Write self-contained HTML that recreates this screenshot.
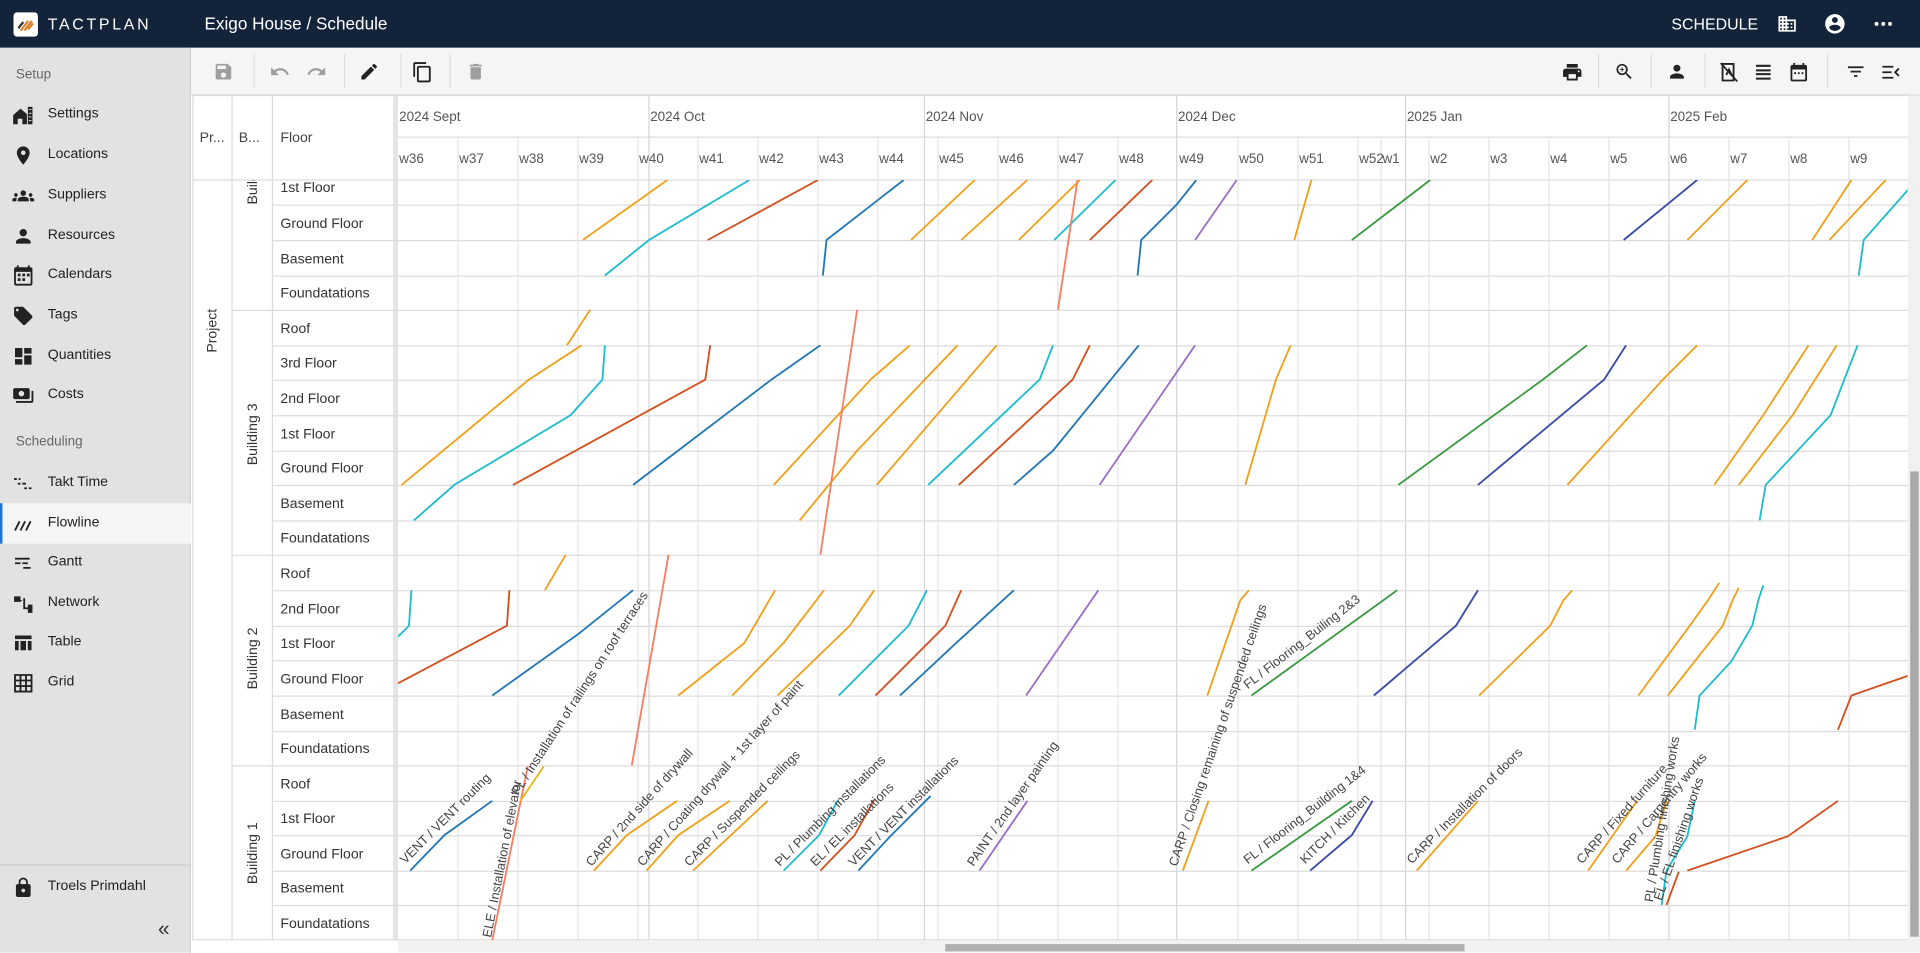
<!DOCTYPE html>
<html><head><meta charset="utf-8"><style>
*{box-sizing:border-box;margin:0;padding:0}
html,body{width:1920px;height:953px;overflow:hidden;background:#fff;font-family:"Liberation Sans",Arial,sans-serif}
.app{position:absolute;left:0;top:0;width:1568px;height:778px;transform:scale(1.2244898);transform-origin:0 0}
.hdr{position:absolute;left:0;top:0;width:1568px;height:39px;background:#13233a;color:#fff}
.side{position:absolute;left:0;top:39px;width:156px;height:739px;background:#e2e2e2;border-right:1px solid #d0d0d0}
.side .sec{position:absolute;left:13px;font-size:11px;color:#666}
.side .it{position:absolute;left:0;width:156px;height:33px;font-size:11.5px;color:#222}
.side .it span{position:absolute;left:39px;top:10px}
.side .it svg{position:absolute;left:10px;top:8px}
.tb{position:absolute;left:156px;top:39px;width:1412px;height:39px;background:#f5f5f5;border-bottom:1px solid #ddd}
.tb svg{position:absolute;top:11px}
.tb .dv{position:absolute;top:5px;width:1px;height:28px;background:#ddd}
</style></head><body><div class="app">
<div class="hdr">
 <svg style="position:absolute;left:11px;top:10px" width="20" height="20" viewBox="0 0 20 20"><rect width="20" height="20" rx="3" fill="#fff"/><path d="M4 13l4-5M6 15l6-8M9 15l6-8M12 14l4-5" stroke="#d9822b" stroke-width="1.8"/><path d="M4 13l4-5" stroke="#333" stroke-width="1.8"/></svg>
 <div style="position:absolute;left:39px;top:12px;font-size:13px;letter-spacing:2.2px">TACTPLAN</div>
 <div style="position:absolute;left:167px;top:11px;font-size:14px">Exigo House / Schedule</div>
 <div style="position:absolute;left:1365px;top:12px;font-size:13px">SCHEDULE</div>
 <svg style="position:absolute;left:1451px;top:11px" width="17" height="17" viewBox="0 0 24 24"><path fill="#fff" d="M12 7V3H2v18h20V7H12zM6 19H4v-2h2v2zm0-4H4v-2h2v2zm0-4H4V9h2v2zm0-4H4V5h2v2zm4 12H8v-2h2v2zm0-4H8v-2h2v2zm0-4H8V9h2v2zm0-4H8V5h2v2zm10 12h-8v-2h2v-2h-2v-2h2v-2h-2V9h8v10zm-2-8h-2v2h2v-2zm0 4h-2v2h2v-2z"/></svg>
 <svg style="position:absolute;left:1489px;top:10px" width="19" height="19" viewBox="0 0 24 24"><path fill="#fff" d="M12 2C6.48 2 2 6.480 2 12s4.48 10 10 10 10-4.48 10-10S17.52 2 12 2zm0 3c1.66 0 3 1.34 3 3s-1.34 3-3 3-3-1.34-3-3 1.34-3 3-3zm0 14.2c-2.5 0-4.71-1.28-6-3.22.03-1.99 4-3.08 6-3.08 1.99 0 5.97 1.09 6 3.08-1.29 1.94-3.5 3.22-6 3.22z"/></svg>
 <svg style="position:absolute;left:1530px;top:17px" width="16" height="5" viewBox="0 0 16 5"><circle cx="2.5" cy="2.5" r="1.6" fill="#fff"/><circle cx="8" cy="2.5" r="1.6" fill="#fff"/><circle cx="13.5" cy="2.5" r="1.6" fill="#fff"/></svg>
</div>
<div class="side">
 <div class="sec" style="top:16px">Setup</div>
 <div class="it" style="top:38px"><svg width="18" height="18" viewBox="0 0 24 24"><path fill="#222" d="M1 12l8-7 7 6v11h-5v-6H6v6H1z"/><rect x="17" y="3" width="5" height="19" fill="#222"/><path d="M18 6h3M18 10h3M18 14h3M18 18h3" stroke="#e2e2e2"/></svg><span>Settings</span></div>
 <div class="it" style="top:71px"><svg width="18" height="18" viewBox="0 0 24 24"><path fill="#222" d="M12 2C8.13 2 5 5.13 5 9c0 5.25 7 13 7 13s7-7.75 7-13c0-3.870-3.13-7-7-7zm0 9.5c-1.38 0-2.5-1.12-2.5-2.5s1.12-2.5 2.5-2.5 2.5 1.12 2.5 2.5-1.12 2.5-2.5 2.5z"/></svg><span>Locations</span></div>
 <div class="it" style="top:104px"><svg width="18" height="18" viewBox="0 0 24 24"><path fill="#222" d="M12 12.75c1.63 0 3.07.39 4.24.9 1.08.48 1.76 1.56 1.76 2.73V18H6v-1.61c0-1.18.68-2.26 1.76-2.73 1.17-.52 2.61-.91 4.240-.91zM4 13c1.1 0 2-.9 2-2s-.9-2-2-2-2 .9-2 2 .9 2 2 2zm1.13 1.1C4.76 14.04 4.39 14 4 14c-.99 0-1.93.21-2.78.58C.48 14.9 0 15.62 0 16.43V18h4.5v-1.61c0-.83.23-1.61.63-2.29zM20 13c1.1 0 2-.9 2-2s-.9-2-2-2-2 .9-2 2 .9 2 2 2zm4 3.43c0-.81-.48-1.53-1.22-1.85-.85-.37-1.79-.58-2.78-.58-.39 0-.76.04-1.13.1.4.68.63 1.46.63 2.29V18H24v-1.57zM12 6c1.66 0 3 1.34 3 3s-1.34 3-3 3-3-1.34-3-3 1.34-3 3-3z"/></svg><span>Suppliers</span></div>
 <div class="it" style="top:137px"><svg width="18" height="18" viewBox="0 0 24 24"><path fill="#222" d="M12 12c2.21 0 4-1.79 4-4s-1.79-4-4-4-4 1.79-4 4 1.79 4 4 4zm0 2c-2.67 0-8 1.34-8 4v2h16v-2c0-2.66-5.33-4-8-4z"/></svg><span>Resources</span></div>
 <div class="it" style="top:169px"><svg width="18" height="18" viewBox="0 0 24 24"><path fill="#222" d="M20 3h-1V1h-2v2H7V1H5v2H4c-1.1 0-2 .9-2 2v16c0 1.1.9 2 2 2h16c1.1 0 2-.9 2-2V5c0-1.1-.9-2-2-2zm0 18H4V8h16v13zM6 10h3v3H6zm5 0h3v3h-3zm5 0h3v3h-3zM6 15h3v3H6zm5 0h3v3h-3z"/></svg><span>Calendars</span></div>
 <div class="it" style="top:202px"><svg width="18" height="18" viewBox="0 0 24 24"><path fill="#222" d="M21.41 11.58l-9-9C12.05 2.22 11.55 2 11 2H4c-1.1 0-2 .9-2 2v7c0 .55.22 1.05.59 1.42l9 9c.36.36.86.58 1.41.58s1.05-.22 1.41-.59l7-7c.37-.36.59-.86.59-1.41s-.23-1.06-.59-1.42zM5.5 7C4.67 7 4 6.33 4 5.5S4.67 4 5.5 4 7 4.67 7 5.5 6.33 7 5.5 7z"/></svg><span>Tags</span></div>
 <div class="it" style="top:235px"><svg width="18" height="18" viewBox="0 0 24 24"><path fill="#222" d="M3 13h8V3H3v10zm0 8h8v-6H3v6zm10 0h8V11h-8v10zm0-18v6h8V3h-8z"/></svg><span>Quantities</span></div>
 <div class="it" style="top:267px"><svg width="18" height="18" viewBox="0 0 24 24"><path fill="#222" d="M19 14V6c0-1.1-.9-2-2-2H3c-1.1 0-2 .9-2 2v8c0 1.1.9 2 2 2h14c1.1 0 2-.9 2-2zm-9-1c-1.66 0-3-1.34-3-3s1.34-3 3-3 3 1.34 3 3-1.34 3-3 3zm13-6v11c0 1.1-.9 2-2 2H4v-2h17V7h2z"/></svg><span>Costs</span></div>
 <div class="sec" style="top:316px">Scheduling</div>
 <div class="it" style="top:339px"><svg width="18" height="18" viewBox="0 0 24 24"><path d="M2 7h3M7 7h2M6 12h3M11 12h4M13 17h3M18 17h3" stroke="#222" stroke-width="2"/></svg><span>Takt Time</span></div>
 <div class="it" style="top:372px;background:#f5f5f5;border-left:2px solid #1976d2"><svg width="18" height="18" viewBox="0 0 24 24" style="left:8px"><path d="M3 19l5-10M9 19l5-10M15 19l5-10" stroke="#222" stroke-width="2"/></svg><span style="left:37px">Flowline</span></div>
 <div class="it" style="top:404px"><svg width="18" height="18" viewBox="0 0 24 24"><path d="M3 7h16M3 12h6M11 12h6M12 17h8" stroke="#222" stroke-width="2"/></svg><span>Gantt</span></div>
 <div class="it" style="top:437px"><svg width="18" height="18" viewBox="0 0 24 24"><path fill="#222" d="M2 4h7v6H2zM11 6h3v10h3v-3h5v9h-5v-4h-5V6zM11 8h-2v2"/></svg><span>Network</span></div>
 <div class="it" style="top:469px"><svg width="18" height="18" viewBox="0 0 24 24"><path fill="#222" d="M3 4h18v4H3zM3 10h4v10H3zM9 10h6v10H9zM17 10h4v10h-4z"/></svg><span>Table</span></div>
 <div class="it" style="top:502px"><svg width="18" height="18" viewBox="0 0 24 24"><path fill="none" stroke="#222" stroke-width="2" d="M3 3h18v18H3zM9 3v18M15 3v18M3 9h18M3 15h18"/></svg><span>Grid</span></div>
 <div style="position:absolute;left:0;top:667px;width:156px;height:1px;background:#ccc"></div>
 <div class="it" style="top:669px"><svg width="18" height="18" viewBox="0 0 24 24"><path fill="#222" d="M18 8h-1V6c0-2.76-2.24-5-5-5S7 3.24 7 6v2H6c-1.1 0-2 .9-2 2v10c0 1.1.9 2 2 2h12c1.1 0 2-.9 2-2V10c0-1.1-.9-2-2-2zm-6 9c-1.1 0-2-.9-2-2s.9-2 2-2 2 .9 2 2-.9 2-2 2zm3.1-9H8.9V6c0-1.71 1.39-3.1 3.1-3.1 1.71 0 3.1 1.39 3.1 3.1v2z"/></svg><span>Troels Primdahl</span></div>
 <div style="position:absolute;left:129px;top:710px;font-size:17px;color:#333">«</div>
</div>
<div class="tb">
 <svg style="left:18px" width="17" height="17" viewBox="0 0 24 24"><path fill="#9e9e9e" d="M17 3H5c-1.11 0-2 .9-2 2v14c0 1.1.89 2 2 2h14c1.1 0 2-.9 2-2V7l-4-4zm-5 16c-1.66 0-3-1.34-3-3s1.34-3 3-3 3 1.34 3 3-1.34 3-3 3zm3-10H5V5h10v4z"/></svg>
 <div class="dv" style="left:51px"></div>
 <svg style="left:64px" width="17" height="17" viewBox="0 0 24 24"><path fill="#9e9e9e" d="M12.5 8c-2.65 0-5.05.99-6.9 2.6L2 7v9h9l-3.62-3.62c1.39-1.16 3.16-1.88 5.12-1.88 3.54 0 6.55 2.31 7.6 5.5l2.37-.78C21.08 11.03 17.15 8 12.5 8z"/></svg>
 <svg style="left:94px" width="17" height="17" viewBox="0 0 24 24"><path fill="#9e9e9e" d="M18.4 10.6C16.55 8.99 14.15 8 11.5 8c-4.65 0-8.58 3.03-9.96 7.22L3.9 16c1.05-3.19 4.05-5.5 7.6-5.5 1.95 0 3.73.72 5.12 1.88L13 16h9V7l-3.6 3.6z"/></svg>
 <div class="dv" style="left:125px"></div>
 <svg style="left:137px" width="17" height="17" viewBox="0 0 24 24"><path fill="#222" d="M3 17.25V21h3.75L17.81 9.94l-3.75-3.75L3 17.25zM20.71 7.04c.39-.39.39-1.02 0-1.41l-2.34-2.34c-.39-.39-1.02-.39-1.41 0l-1.83 1.83 3.75 3.75 1.83-1.83z"/></svg>
 <div class="dv" style="left:171px"></div>
 <svg style="left:180px" width="18" height="18" viewBox="0 0 24 24"><path fill="#222" d="M16 1H4c-1.1 0-2 .9-2 2v14h2V3h12V1zm3 4H8c-1.1 0-2 .9-2 2v14c0 1.1.9 2 2 2h11c1.1 0 2-.9 2-2V7c0-1.1-.9-2-2-2zm0 16H8V7h11v14z"/></svg>
 <div class="dv" style="left:211px"></div>
 <svg style="left:224px" width="17" height="17" viewBox="0 0 24 24"><path fill="#9e9e9e" d="M6 19c0 1.1.9 2 2 2h8c1.1 0 2-.9 2-2V7H6v12zM19 4h-3.5l-1-1h-5l-1 1H5v2h14V4z"/></svg>
 <svg style="left:1119px" width="18" height="18" viewBox="0 0 24 24"><path fill="#222" d="M19 8H5c-1.66 0-3 1.34-3 3v6h4v4h12v-4h4v-6c0-1.66-1.34-3-3-3zm-3 11H8v-5h8v5zm3-7c-.55 0-1-.45-1-1s.45-1 1-1 1 .45 1 1-.45 1-1 1zm-1-9H6v4h12V3z"/></svg>
 <div class="dv" style="left:1149px"></div>
 <svg style="left:1162px" width="17" height="17" viewBox="0 0 24 24"><path fill="#222" d="M15.5 14h-.79l-.28-.27C15.41 12.59 16 11.11 16 9.5 16 5.91 13.09 3 9.5 3S3 5.91 3 9.5 5.91 16 9.5 16c1.61 0 3.09-.59 4.23-1.57l.27.28v.79l5 4.99L20.49 19l-4.990-5zm-6 0C7.01 14 5 11.99 5 9.5S7.01 5 9.5 5 14 7.01 14 9.5 11.99 14 9.5 14zM12 10h-2v2H9v-2H7V9h2V7h1v2h2v1z"/></svg>
 <div class="dv" style="left:1192px"></div>
 <svg style="left:1205px" width="17" height="17" viewBox="0 0 24 24"><path fill="#222" d="M12 12c2.21 0 4-1.79 4-4s-1.79-4-4-4-4 1.79-4 4 1.79 4 4 4zm0 2c-2.67 0-8 1.34-8 4v2h16v-2c0-2.66-5.33-4-8-4z"/></svg>
 <div class="dv" style="left:1236px"></div>
 <svg style="left:1247px" width="18" height="18" viewBox="0 0 24 24"><path fill="none" stroke="#222" stroke-width="2" d="M5 3h12v18H5zM3 2l18 20M9 15l3-6 3 6"/></svg>
 <svg style="left:1275px" width="18" height="18" viewBox="0 0 24 24"><path stroke="#222" stroke-width="2.2" d="M4 5h16M4 10h16M4 14h16M4 19h16"/></svg>
 <svg style="left:1304px" width="18" height="18" viewBox="0 0 24 24"><path fill="#222" d="M19 4h-1V2h-2v2H8V2H6v2H5c-1.1 0-2 .9-2 2v14c0 1.1.9 2 2 2h14c1.1 0 2-.9 2-2V6c0-1.1-.9-2-2-2zm0 16H5V9h14v11zM7 12h2v2H7zm4 0h2v2h-2zm4 0h2v2h-2z"/></svg>
 <div class="dv" style="left:1336px"></div>
 <svg style="left:1351px" width="17" height="17" viewBox="0 0 24 24"><path fill="#222" d="M10 18h4v-2h-4v2zM3 6v2h18V6H3zm3 7h12v-2H6v2z"/></svg>
 <svg style="left:1379px" width="18" height="18" viewBox="0 0 24 24"><path stroke="#222" stroke-width="2" fill="none" d="M3 6h12M3 12h10M3 18h12M21 8l-4 4 4 4"/></svg>
</div>
<svg style="position:absolute;left:0;top:0" width="1568" height="778" viewBox="0 0 1568 778" font-family="Liberation Sans, Arial, sans-serif">
<defs><clipPath id="cb"><rect x="157" y="147" width="1401" height="621"/></clipPath><clipPath id="cc"><rect x="325" y="147" width="1233" height="621"/></clipPath><clipPath id="ch"><rect x="325" y="78" width="1233" height="69"/></clipPath></defs>
<rect x="157" y="78" width="1401" height="690" fill="#fff"/>
<rect x="321" y="78" width="4" height="690" fill="#e4e4e4"/>
<g stroke="#dcdcdc" stroke-width="1">
<line x1="157" y1="78" x2="1558" y2="78"/><line x1="157" y1="147" x2="1558" y2="147"/><line x1="325" y1="112" x2="1558" y2="112"/>
<line x1="157.5" y1="78" x2="157.5" y2="768"/><line x1="189.5" y1="78" x2="189.5" y2="768"/><line x1="222.5" y1="78" x2="222.5" y2="768"/>
</g>
<g font-size="11.5" fill="#444"><text x="163" y="116">Pr...</text><text x="195" y="116">B...</text><text x="229" y="116">Floor</text></g>
<g clip-path="url(#ch)">
<g stroke="#e4e4e4"><line x1="374" y1="112" x2="374" y2="147"/><line x1="423" y1="112" x2="423" y2="147"/><line x1="472" y1="112" x2="472" y2="147"/><line x1="521" y1="112" x2="521" y2="147"/><line x1="570" y1="112" x2="570" y2="147"/><line x1="619" y1="112" x2="619" y2="147"/><line x1="668" y1="112" x2="668" y2="147"/><line x1="717" y1="112" x2="717" y2="147"/><line x1="766" y1="112" x2="766" y2="147"/><line x1="815" y1="112" x2="815" y2="147"/><line x1="864" y1="112" x2="864" y2="147"/><line x1="913" y1="112" x2="913" y2="147"/><line x1="1011" y1="112" x2="1011" y2="147"/><line x1="1060" y1="112" x2="1060" y2="147"/><line x1="1109" y1="112" x2="1109" y2="147"/><line x1="1128" y1="112" x2="1128" y2="147"/><line x1="1167" y1="112" x2="1167" y2="147"/><line x1="1216" y1="112" x2="1216" y2="147"/><line x1="1265" y1="112" x2="1265" y2="147"/><line x1="1314" y1="112" x2="1314" y2="147"/><line x1="1412" y1="112" x2="1412" y2="147"/><line x1="1461" y1="112" x2="1461" y2="147"/><line x1="1510" y1="112" x2="1510" y2="147"/></g>
<g stroke="#d4d4d4"><line x1="530" y1="78" x2="530" y2="147"/><line x1="755" y1="78" x2="755" y2="147"/><line x1="961" y1="78" x2="961" y2="147"/><line x1="1148" y1="78" x2="1148" y2="147"/><line x1="1363" y1="78" x2="1363" y2="147"/></g>
<g font-size="11" fill="#555"><text x="326" y="99">2024 Sept</text><text x="531" y="99">2024 Oct</text><text x="756" y="99">2024 Nov</text><text x="962" y="99">2024 Dec</text><text x="1149" y="99">2025 Jan</text><text x="1364" y="99">2025 Feb</text>
<text x="326" y="133">w36</text><text x="375" y="133">w37</text><text x="424" y="133">w38</text><text x="473" y="133">w39</text><text x="522" y="133">w40</text><text x="571" y="133">w41</text><text x="620" y="133">w42</text><text x="669" y="133">w43</text><text x="718" y="133">w44</text><text x="767" y="133">w45</text><text x="816" y="133">w46</text><text x="865" y="133">w47</text><text x="914" y="133">w48</text><text x="963" y="133">w49</text><text x="1012" y="133">w50</text><text x="1061" y="133">w51</text><text x="1110" y="133">w52</text><text x="1129" y="133">w1</text><text x="1168" y="133">w2</text><text x="1217" y="133">w3</text><text x="1266" y="133">w4</text><text x="1315" y="133">w5</text><text x="1364" y="133">w6</text><text x="1413" y="133">w7</text><text x="1462" y="133">w8</text><text x="1511" y="133">w9</text></g>
</g>
<g clip-path="url(#cb)">
<g stroke="#e4e4e4"><line x1="374" y1="147" x2="374" y2="768"/><line x1="423" y1="147" x2="423" y2="768"/><line x1="472" y1="147" x2="472" y2="768"/><line x1="521" y1="147" x2="521" y2="768"/><line x1="570" y1="147" x2="570" y2="768"/><line x1="619" y1="147" x2="619" y2="768"/><line x1="668" y1="147" x2="668" y2="768"/><line x1="717" y1="147" x2="717" y2="768"/><line x1="766" y1="147" x2="766" y2="768"/><line x1="815" y1="147" x2="815" y2="768"/><line x1="864" y1="147" x2="864" y2="768"/><line x1="913" y1="147" x2="913" y2="768"/><line x1="1011" y1="147" x2="1011" y2="768"/><line x1="1060" y1="147" x2="1060" y2="768"/><line x1="1109" y1="147" x2="1109" y2="768"/><line x1="1128" y1="147" x2="1128" y2="768"/><line x1="1167" y1="147" x2="1167" y2="768"/><line x1="1216" y1="147" x2="1216" y2="768"/><line x1="1265" y1="147" x2="1265" y2="768"/><line x1="1314" y1="147" x2="1314" y2="768"/><line x1="1412" y1="147" x2="1412" y2="768"/><line x1="1461" y1="147" x2="1461" y2="768"/><line x1="1510" y1="147" x2="1510" y2="768"/></g>
<g stroke="#d4d4d4"><line x1="530" y1="147" x2="530" y2="768"/><line x1="755" y1="147" x2="755" y2="768"/><line x1="961" y1="147" x2="961" y2="768"/><line x1="1148" y1="147" x2="1148" y2="768"/><line x1="1363" y1="147" x2="1363" y2="768"/></g>
<g stroke="#dcdcdc">
<line x1="222" y1="167.5" x2="1558" y2="167.5"/><line x1="222" y1="196.5" x2="1558" y2="196.5"/><line x1="222" y1="225.5" x2="1558" y2="225.5"/><line x1="189" y1="253.5" x2="1558" y2="253.5"/><line x1="222" y1="282.5" x2="1558" y2="282.5"/><line x1="222" y1="310.5" x2="1558" y2="310.5"/><line x1="222" y1="339.5" x2="1558" y2="339.5"/><line x1="222" y1="368.5" x2="1558" y2="368.5"/><line x1="222" y1="396.5" x2="1558" y2="396.5"/><line x1="222" y1="425.5" x2="1558" y2="425.5"/><line x1="189" y1="453.5" x2="1558" y2="453.5"/><line x1="222" y1="482.5" x2="1558" y2="482.5"/><line x1="222" y1="511.5" x2="1558" y2="511.5"/><line x1="222" y1="539.5" x2="1558" y2="539.5"/><line x1="222" y1="568.5" x2="1558" y2="568.5"/><line x1="222" y1="597.5" x2="1558" y2="597.5"/><line x1="189" y1="625.5" x2="1558" y2="625.5"/><line x1="222" y1="654.5" x2="1558" y2="654.5"/><line x1="222" y1="682.5" x2="1558" y2="682.5"/><line x1="222" y1="711.5" x2="1558" y2="711.5"/><line x1="222" y1="739.5" x2="1558" y2="739.5"/><line x1="157" y1="767.5" x2="1558" y2="767.5"/>
</g>
<g font-size="11.5" fill="#333">
<text x="229" y="157">1st Floor</text><text x="229" y="186">Ground Floor</text><text x="229" y="215">Basement</text><text x="229" y="243">Foundatations</text>
<text x="229" y="272">Roof</text><text x="229" y="300">3rd Floor</text><text x="229" y="329">2nd Floor</text><text x="229" y="358">1st Floor</text><text x="229" y="386">Ground Floor</text><text x="229" y="415">Basement</text><text x="229" y="443">Foundatations</text>
<text x="229" y="472">Roof</text><text x="229" y="501">2nd Floor</text><text x="229" y="529">1st Floor</text><text x="229" y="558">Ground Floor</text><text x="229" y="587">Basement</text><text x="229" y="615">Foundatations</text>
<text x="229" y="644">Roof</text><text x="229" y="672">1st Floor</text><text x="229" y="701">Ground Floor</text><text x="229" y="729">Basement</text><text x="229" y="758">Foundatations</text>
<text transform="translate(210,167) rotate(-90)">Building 4</text>
<text transform="translate(210,380) rotate(-90)">Building 3</text>
<text transform="translate(210,563) rotate(-90)">Building 2</text>
<text transform="translate(210,722) rotate(-90)">Building 1</text>
<text transform="translate(177,288) rotate(-90)">Project</text>
</g>
</g>
<g clip-path="url(#cc)" fill="none" stroke-width="1.5">
<g stroke="#f0a01a">
<polyline points="476,196 545,147"/><polyline points="744,196 796,147"/><polyline points="785,196 839,147"/><polyline points="832,196 882,147"/><polyline points="1057,196 1071,147"/><polyline points="1378,196 1427,147"/><polyline points="1480,196 1512,147"/><polyline points="1494,196 1540,147"/>
<polyline points="463,282 482,253"/><polyline points="328,396 432,310 475,282"/><polyline points="632,396 711,310 743,282"/><polyline points="653,425 700,368 782,282"/><polyline points="716,396 814,282"/><polyline points="1017,396 1042,310 1054,282"/><polyline points="1280,396 1358,310 1386,282"/><polyline points="1400,396 1440,339 1477,282"/><polyline points="1420,396 1464,339 1500,282"/>
<polyline points="445,482 462,453"/><polyline points="554,568 608,525 633,482"/><polyline points="598,568 640,525 673,482"/><polyline points="635,568 694,511 714,482"/><polyline points="986,568 1013,490 1020,482"/><polyline points="1208,568 1266,511 1277,490 1284,482"/><polyline points="1338,568 1380,511 1395,490 1404,476"/><polyline points="1362,568 1407,511 1415,490 1420,480"/>
<polyline points="485,711 512,682 553,654"/><polyline points="528,711 554,682 596,654"/><polyline points="566,711 627,654"/><polyline points="966,711 987,654"/><polyline points="1157,711 1207,654"/><polyline points="1297,711 1337,654"/><polyline points="1328,711 1352,683 1361,654"/>
</g>
<g stroke="#1fbccd">
<polyline points="494,225 530,196 612,147"/><polyline points="861,196 911,147"/><polyline points="1518,225 1522,196 1560,153"/>
<polyline points="338,425 371,396 466,339 492,310 494,282"/><polyline points="758,396 849,310 860,282"/><polyline points="1437,425 1442,396 1495,339 1517,282"/>
<polyline points="325,520 334,511 336,482"/><polyline points="685,568 742,511 757,482"/><polyline points="1384,596 1388,568 1414,540 1431,511 1436,490 1440,478"/>
<polyline points="640,711 669,682 684,654"/><polyline points="1357,739 1361,711 1378,683 1384,654"/>
</g>
<g stroke="#d4501f">
<polyline points="578,196 668,147"/><polyline points="890,196 941,147"/><polyline points="419,396 576,310 580,282"/><polyline points="783,396 876,310 890,282"/>
<polyline points="325,558 414,511 416,482"/><polyline points="715,568 772,511 785,482"/><polyline points="1501,596 1512,568 1558,552"/>
<polyline points="670,711 698,682 714,653"/><polyline points="1361,739 1371,712"/><polyline points="1378,711 1460,683 1501,654"/>
</g>
<g stroke="#2178b4">
<polyline points="672,225 675,196 738,147"/><polyline points="929,225 932,196 961,167 977,147"/><polyline points="517,396 630,310 670,282"/><polyline points="828,396 860,368 930,282"/>
<polyline points="402,568 472,518 517,482"/><polyline points="735,568 781,525 828,482"/>
<polyline points="335,711 363,682 402,654"/><polyline points="701,711 727,683 760,650"/>
</g>
<g stroke="#f47f62"><polyline points="864,253 880,147"/><polyline points="670,453 700,253"/><polyline points="516,625 546,453"/><polyline points="402,768 431,626"/></g>
<g stroke="#9a6fc4"><polyline points="976,196 1010,147"/><polyline points="898,396 976,282"/><polyline points="838,568 897,482"/><polyline points="800,711 839,654"/></g>
<g stroke="#3d9a44"><polyline points="1104,196 1168,147"/><polyline points="1142,396 1260,310 1296,282"/><polyline points="1022,568 1130,490 1141,482"/><polyline points="1022,711 1104,654"/></g>
<g stroke="#3b4ba6"><polyline points="1326,196 1386,147"/><polyline points="1207,396 1310,310 1328,282"/><polyline points="1122,568 1189,511 1207,482"/><polyline points="1070,711 1104,682 1121,654"/></g>
<g stroke="#e6b81c"><polyline points="425,654 444,626"/></g>
</g>
<g font-size="10.5" fill="#444">
<text transform="translate(331,706) rotate(-45)">VENT / VENT routing</text>
<text transform="translate(401,766) rotate(-79)">ELE / Installation of elevator</text>
<text transform="translate(423,650) rotate(-57)">PL / Installation of railings on roof terraces</text>
<text transform="translate(483,708) rotate(-48)">CARP / 2nd side of drywall</text>
<text transform="translate(525,708) rotate(-48.5)">CARP / Coating drywall + 1st layer of paint</text>
<text transform="translate(563,708) rotate(-45)">CARP / Suspended ceilings</text>
<text transform="translate(637,708) rotate(-45)">PL / Plumbing installations</text>
<text transform="translate(666,708) rotate(-45)">EL / EL installations</text>
<text transform="translate(697,708) rotate(-45)">VENT / VENT installations</text>
<text transform="translate(795,708) rotate(-55)">PAINT / 2nd layer painting</text>
<text transform="translate(961,708) rotate(-71)">CARP / Closing remaining of suspended ceilings</text>
<text transform="translate(1019,563) rotate(-38)">FL / Flooring_Builing 2&amp;3</text>
<text transform="translate(1019,706) rotate(-38)">FL / Flooring_Building 1&amp;4</text>
<text transform="translate(1066,706) rotate(-45)">KITCH / Kitchen</text>
<text transform="translate(1153,706) rotate(-45)">CARP / Installation of doors</text>
<text transform="translate(1292,706) rotate(-48)">CARP / Fixed furniture</text>
<text transform="translate(1321,706) rotate(-50)">CARP / Carpentry works</text>
<text transform="translate(1350,737) rotate(-81)">PL / Plumbing finishing works</text>
<text transform="translate(1357,736) rotate(-71)">EL / EL finishing works</text>
</g>
<rect x="1558" y="78" width="10" height="700" fill="#f1f1f1"/>
<rect x="1560" y="385" width="7" height="380" fill="#a8a8a8"/>
<rect x="325" y="768" width="1233" height="10" fill="#f1f1f1"/>
<rect x="772" y="771" width="424" height="6" fill="#b0b0b0"/>
</svg>
</div></body></html>
